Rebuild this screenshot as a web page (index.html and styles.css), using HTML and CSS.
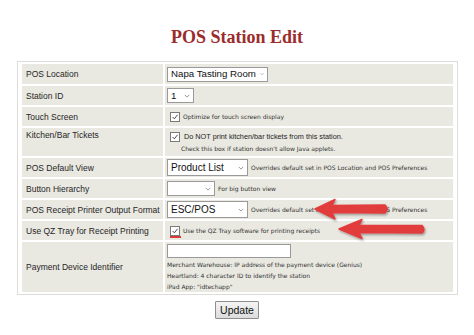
FILE: index.html
```html
<!DOCTYPE html>
<html>
<head>
<meta charset="utf-8">
<link rel="stylesheet" href="styles.css">
</head>
<body>
  <div class="page">
    <h1 class="title">POS Station Edit</h1>
    <table class="edit-tbl">
      <colgroup><col class="c-lbl"><col class="c-val"></colgroup>
      <tr>
        <td class="lbl">POS Location</td>
        <td class="val"><span class="sel sel-loc">Napa Tasting Room<svg class="chev" viewBox="0 0 8 5"><path d="M1 1 L4 4 L7 1"/></svg></span></td>
      </tr>
      <tr>
        <td class="lbl">Station ID</td>
        <td class="val"><span class="sel sel-id">1<svg class="chev" viewBox="0 0 8 5"><path d="M1 1 L4 4 L7 1"/></svg></span></td>
      </tr>
      <tr>
        <td class="lbl">Touch Screen</td>
        <td class="val"><span class="chk"><svg viewBox="0 0 10 10"><path d="M2 5 L4.2 7.3 L8.2 2.2"/></svg></span><span class="note">Optimize for touch screen display</span></td>
      </tr>
      <tr class="tall">
        <td class="lbl lbl-top">Kitchen/Bar Tickets</td>
        <td class="val">
          <div class="kitchen"><span class="chk"><svg viewBox="0 0 10 10"><path d="M2 5 L4.2 7.3 L8.2 2.2"/></svg></span><span class="strong-note">Do NOT print kitchen/bar tickets from this station.</span></div>
          <div class="note sub-note">Check this box if station doesn't allow Java applets.</div>
        </td>
      </tr>
      <tr>
        <td class="lbl">POS Default View</td>
        <td class="val"><span class="sel sel-big">Product List<svg class="chev" viewBox="0 0 8 5"><path d="M1 1 L4 4 L7 1"/></svg></span><span class="note">Overrides default set in POS Location and POS Preferences</span></td>
      </tr>
      <tr>
        <td class="lbl">Button Hierarchy</td>
        <td class="val"><span class="sel sel-empty"><svg class="chev" viewBox="0 0 8 5"><path d="M1 1 L4 4 L7 1"/></svg></span><span class="note">For big button view</span></td>
      </tr>
      <tr>
        <td class="lbl">POS Receipt Printer Output Format</td>
        <td class="val"><span class="sel sel-big">ESC/POS<svg class="chev" viewBox="0 0 8 5"><path d="M1 1 L4 4 L7 1"/></svg></span><span class="note">Overrides default set in POS Location and POS Preferences</span></td>
      </tr>
      <tr>
        <td class="lbl">Use QZ Tray for Receipt Printing</td>
        <td class="val"><span class="chk"><svg viewBox="0 0 10 10"><path d="M2 5 L4.2 7.3 L8.2 2.2"/></svg></span><span class="note">Use the QZ Tray software for printing receipts</span></td>
      </tr>
      <tr class="taller">
        <td class="lbl">Payment Device Identifier</td>
        <td class="val">
          <input type="text" class="txt">
          <div class="note line">Merchant Warehouse: IP address of the payment device (Genius)</div>
          <div class="note line">Heartland: 4 character ID to identify the station</div>
          <div class="note line">iPad App: "idtechapp"</div>
        </td>
      </tr>
    </table>
    <div class="actions"><button class="btn">Update</button></div>

    <svg class="marks" viewBox="0 0 474 335" width="474" height="335">
      <defs>
        <filter id="shade" x="-10%" y="-40%" width="130%" height="200%">
          <feDropShadow dx="1" dy="1.5" stdDeviation="1" flood-color="#000" flood-opacity="0.35"/>
        </filter>
      </defs>
      <g fill="#e23c3c" stroke="#e23c3c" stroke-width="1.5" stroke-linejoin="round" filter="url(#shade)">
        <path d="M315 209 L335 199.5 L332 205.5 L385 205 Q389 209 385 213 L332 212.5 L335 219 Z"/>
        <path d="M339 229 L362 219.5 L359 225.5 L422 225.5 Q426 229.5 422 233 L359 232.5 L362 238.5 Z"/>
      </g>
      <rect x="170" y="236" width="11" height="2" fill="#d93a3a"/>
    </svg>
  </div>
</body>
</html>
```

FILE: styles.css
```css
body{
  margin: 0;
  background: #fff;
  font-family: "Liberation Sans", Arial, sans-serif;
  color: #222;
}

.page{
  position: relative;
  width: 474px;
  height: 335px;
  overflow: hidden;
}

.title{
  margin: 0 0 14px 0;
  padding-top: 27px;
  line-height: 20px;
  font-family: "Liberation Serif", "Times New Roman", serif;
  font-size: 18px;
  font-weight: bold;
  color: #9b2c2c;
  text-align: center;
}

.edit-tbl{
  box-sizing: border-box;
  margin-left: 17px;
  width: 441px;
  table-layout: fixed;
  border: 1px solid #dcdcd8;
  padding: 0 2px;
  border-spacing: 2px;
}

.c-lbl{
  width: 141px;
}

.c-val{
  width: 288px;
}

.edit-tbl td{
  background-color: #e9e8e1;
  height: 19px;
  padding: 0;
  font-size: 8.5px;
  line-height: 10px;
  vertical-align: middle;
  white-space: nowrap;
}

.edit-tbl tr:first-child td{
  height: 20px;
}

.edit-tbl tr.tall td{
  height: 26px;
}

.edit-tbl tr.taller td{
  height: 50px;
}

.lbl{
  padding-left: 4px !important;
  color: #262626;
}

.edit-tbl td.lbl-top{
  vertical-align: top;
  padding-top: 2px !important;
  height: 24px;
}

.val{
  padding-left: 2px !important;
}

.sel{
  display: inline-flex;
  align-items: center;
  box-sizing: border-box;
  vertical-align: middle;
  height: 15px;
  padding: 0 3px 0 3px;
  background: #fff;
  border: 1px solid #9a9a9a;
  font-size: 9.7px;
  color: #111;
}

.sel .chev{
  width: 6px;
  height: 4px;
  margin-left: 4px;
  fill: none;
  stroke: #777;
  stroke-width: 1;
}

.sel-loc{
  width: 101px;
}

.sel-id{
  width: 27px;
  justify-content: space-between;
}

.sel-big{
  width: 81px;
  height: 17px;
  font-size: 10px;
  justify-content: space-between;
}

.sel-empty{
  width: 48px;
  height: 15px;
  justify-content: flex-end;
}

.note{
  font-family: "DejaVu Sans", Verdana, sans-serif;
  font-size: 6px;
  color: #333;
  vertical-align: middle;
  margin-left: 3px;
}

.chk{
  display: inline-block;
  box-sizing: border-box;
  width: 10px;
  height: 10px;
  margin-left: 3px;
  vertical-align: middle;
  background: #fff;
  border: 1px solid #7a7a7a;
}

.chk svg{
  display: block;
  width: 8px;
  height: 8px;
  fill: none;
  stroke: #333;
  stroke-width: 1.1;
}

.kitchen{
  display: flex;
  align-items: center;
  height: 12px;
}

.strong-note{
  margin-left: 4px;
  font-size: 7.3px;
  color: #1e1e1e;
}

.sub-note{
  display: block;
  margin-left: 14px;
  margin-top: 1px;
  line-height: 9px;
}

.txt{
  display: block;
  box-sizing: border-box;
  width: 124px;
  height: 14px;
  margin: 1px 0 1px 0;
  border: 1px solid #999;
  background: #fff;
  padding: 0;
}

.line{
  margin-left: 0;
  line-height: 11px;
}

.actions{
  text-align: center;
  margin-top: 5px;
}

.btn{
  height: 18px;
  padding: 0 4px;
  font-family: "Liberation Sans", Arial, sans-serif;
  font-size: 10.5px;
  color: #111;
  background: linear-gradient(#f4f4f4, #dcdcdc);
  border: 1px solid #8e8e8e;
  border-radius: 1px;
}

.marks{
  position: absolute;
  left: 0;
  top: 0;
  pointer-events: none;
}
```
